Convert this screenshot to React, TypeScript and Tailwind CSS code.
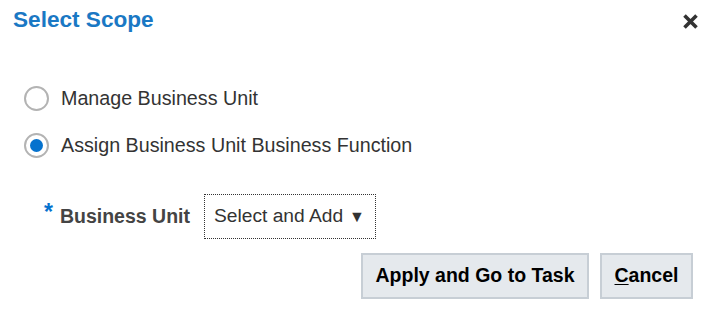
import React, { useState } from 'react';

const font = { fontFamily: '"Liberation Sans", Arial, sans-serif' };

const Radio: React.FC<{ checked: boolean; label: string; onSelect: () => void }> = ({ checked, label, onSelect }) => (
  <label className="flex h-[47px] items-center cursor-pointer" onClick={onSelect}>
    <span className="ml-[24px] flex h-[25px] w-[25px] items-center justify-center rounded-full border-2 border-[#b3b3b3] bg-white">
      {checked && <span className="h-[13px] w-[13px] rounded-full bg-[#0572ce]"></span>}
    </span>
    <span className="ml-[12px] text-[19.7px] leading-none text-[#333333]">{label}</span>
  </label>
);

const App: React.FC = () => {
  const [scope, setScope] = useState<'manage' | 'assign'>('assign');

  return (
    <div className="h-[320px] w-[712px] bg-white" style={font}>
      <div className="flex h-[32px] items-end justify-between pl-[13px] pr-[12px]">
        <h1 className="text-[22.6px] font-bold leading-[25px] text-[#1a78c4]">Select Scope</h1>
        <button className="mb-[1px] flex h-[20px] w-[20px] items-center justify-center" aria-label="Close">
          <svg width="17" height="17" viewBox="0 0 17 17">
            <path d="M2.5 2.5 L14.5 14.5 M14.5 2.5 L2.5 14.5" stroke="#333333" strokeWidth="3.6" strokeLinecap="butt" />
          </svg>
        </button>
      </div>

      <div className="mt-[43px] flex flex-col">
        <Radio checked={scope === 'manage'} label="Manage Business Unit" onSelect={() => setScope('manage')} />
        <Radio checked={scope === 'assign'} label="Assign Business Unit Business Function" onSelect={() => setScope('assign')} />
      </div>

      <div className="mt-[25px] flex h-[45px] items-center">
        <span className="ml-[44px] mb-[8px] text-[23px] font-bold leading-none text-[#0572ce]">*</span>
        <span className="ml-[7px] text-[19.5px] font-bold leading-none text-[#444444]">Business Unit</span>
        <div className="ml-[14px] flex h-[45px] w-[172px] items-center border border-dotted border-[#333333] bg-white pl-[9px] text-[19.2px] text-[#333333]">
          <span>Select and Add</span>
          <span className="ml-[6px] text-[16px]">▼</span>
        </div>
      </div>

      <div className="mt-[14px] flex justify-end gap-[11px] pr-[19px]">
        <button className="h-[46px] w-[228px] border-2 border-[#c7ced5] bg-[#e5e9ed] text-[19.5px] font-bold text-black">
          Apply and Go to Task
        </button>
        <button className="h-[46px] w-[93px] border-2 border-[#c7ced5] bg-[#e5e9ed] text-[19.5px] font-bold text-black">
          <span className="underline underline-offset-2">C</span>ancel
        </button>
      </div>
    </div>
  );
};

export default App;
